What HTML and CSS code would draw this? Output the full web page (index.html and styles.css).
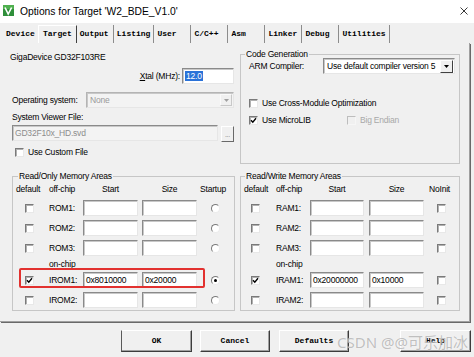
FILE: index.html
```html
<!DOCTYPE html>
<html>
<head>
<meta charset="utf-8">
<link rel="stylesheet" href="styles.css">
</head>
<body>
<header class="titlebar">
  <svg class="appicon" viewBox="0 0 11 11" width="11" height="11">
    <rect x="0" y="0" width="11" height="11" fill="#2f8f3a"/>
    <rect x="0" y="0" width="11" height="4" fill="#4fb04f"/>
    <path d="M2 2.5 L5.2 9 L8.6 2.5" fill="none" stroke="#fff" stroke-width="1.6"/>
  </svg>
  <span class="title">Options for Target 'W2_BDE_V1.0'</span>
  <svg class="close" viewBox="0 0 8 8" width="8" height="8">
    <path d="M0.5 0.5 L7.5 7.5 M7.5 0.5 L0.5 7.5" stroke="#222" stroke-width="0.9"/>
  </svg>
</header>

<nav class="tabs">
  <span class="tab first">Device</span>
  <span class="tab active">Target</span>
  <span class="tab">Output</span>
  <span class="tab">Listing</span>
  <span class="tab">User</span>
  <span class="tab">C/C++</span>
  <span class="tab">Asm</span>
  <span class="tab">Linker</span>
  <span class="tab">Debug</span>
  <span class="tab">Utilities</span>
</nav>

<main class="panel">
  <section class="top">
    <div class="lcol">
      <div class="device">GigaDevice GD32F103RE</div>
      <div class="xtal">
        <span class="lbl"><u>X</u>tal (MHz):</span>
        <span class="edit xtal-in"><span class="hl">12.0</span></span>
      </div>
      <div class="os">
        <span class="os-lbl">Operating system:</span>
        <span class="combo disabled">None<span class="arrow dis"><svg viewBox="0 0 5 3" width="5" height="3"><path d="M0 0 H5 L2.5 3 Z" fill="#a0a0a0"/></svg></span></span>
      </div>
      <div class="svf-label">System Viewer File:</div>
      <div class="svf">
        <span class="edit disabled svf-in">GD32F10x_HD.svd</span>
        <span class="browse">...</span>
      </div>
      <div class="check-row custom"><span class="cb"></span>Use Custom File</div>
    </div>

    <fieldset class="group codegen">
      <legend>Code Generation</legend>
      <div class="cg-body">
        <div class="arm">
          <span class="arm-lbl">ARM Compiler:</span>
          <span class="combo cg-combo">Use default compiler version 5<span class="arrow btnarrow"><svg viewBox="0 0 5 3" width="5" height="3"><path d="M0 0 H5 L2.5 3 Z" fill="#000"/></svg></span></span>
        </div>
        <div class="check-row cross"><span class="cb"></span>Use Cross-Module Optimization</div>
        <div class="check-row micro">
          <span class="micro-item"><span class="cb checked"><svg viewBox="0 0 7 7" width="7" height="7"><path d="M1 3.2 L2.8 5.2 L6 1.3" fill="none" stroke="#000" stroke-width="1.4"/></svg></span>Use MicroLIB</span>
          <span class="big"><span class="cb dis"></span><span class="grey">Big Endian</span></span>
        </div>
      </div>
    </fieldset>
  </section>

  <section class="mem">
    <fieldset class="group ro">
      <legend>Read/Only Memory Areas</legend>
      <div class="memgrid ro-grid">
        <span class="h c1">default</span><span class="h">off-chip</span><span class="h ctr s1">Start</span><span class="h ctr">Size</span><span class="h c5">Startup</span>

        <span class="cb c1b"></span><span>ROM1:</span><span class="edit s1"></span><span class="edit"></span><span class="rb"></span>
        <span class="cb c1b"></span><span>ROM2:</span><span class="edit s1"></span><span class="edit"></span><span class="rb"></span>
        <span class="cb c1b"></span><span>ROM3:</span><span class="edit s1"></span><span class="edit"></span><span class="rb"></span>

        <span></span><span class="onchip">on-chip</span><span></span><span></span><span></span>

        <span class="cb c1b checked"><svg viewBox="0 0 7 7" width="7" height="7"><path d="M1 3.2 L2.8 5.2 L6 1.3" fill="none" stroke="#000" stroke-width="1.4"/></svg></span><span>IROM1:</span><span class="edit s1">0x8010000</span><span class="edit">0x20000</span><span class="rb on"></span>
        <span class="cb c1b"></span><span>IROM2:</span><span class="edit s1"></span><span class="edit"></span><span class="rb"></span>

        <div class="mark"></div>
      </div>
    </fieldset>

    <fieldset class="group rw">
      <legend>Read/Write Memory Areas</legend>
      <div class="memgrid rw-grid">
        <span class="h c1">default</span><span class="h">off-chip</span><span class="h ctr s1">Start</span><span class="h ctr">Size</span><span class="h c5n">NoInit</span>

        <span class="cb c1r"></span><span>RAM1:</span><span class="edit s1"></span><span class="edit"></span><span class="cb ni"></span>
        <span class="cb c1r"></span><span>RAM2:</span><span class="edit s1"></span><span class="edit"></span><span class="cb ni"></span>
        <span class="cb c1r"></span><span>RAM3:</span><span class="edit s1"></span><span class="edit"></span><span class="cb ni"></span>

        <span></span><span class="onchip">on-chip</span><span></span><span></span><span></span>

        <span class="cb c1r checked"><svg viewBox="0 0 7 7" width="7" height="7"><path d="M1 3.2 L2.8 5.2 L6 1.3" fill="none" stroke="#000" stroke-width="1.4"/></svg></span><span>IRAM1:</span><span class="edit s1">0x20000000</span><span class="edit">0x10000</span><span class="cb ni"></span>
        <span class="cb c1r"></span><span>IRAM2:</span><span class="edit s1"></span><span class="edit"></span><span class="cb ni"></span>
      </div>
    </fieldset>
  </section>
</main>

<footer class="buttons">
  <span class="btn ok">OK</span>
  <span class="btn cancel">Cancel</span>
  <span class="btn defaults">Defaults</span>
  <span class="btn help">Help</span>
</footer>

<div class="watermark">CSDN @@可乐加冰</div>
</body>
</html>
```

FILE: styles.css
```css
* { box-sizing: border-box; }

body {
  margin: 0;
  width: 474px;
  height: 357px;
  overflow: hidden;
  position: relative;
  background: #f0f0f0;
  color: #000;
  font-family: "Liberation Sans", Arial, sans-serif;
  font-size: 8.5px;
  letter-spacing: -0.2px;
}

/* title bar */
.titlebar {
  height: 23px;
  background: #fff;
  display: flex;
  align-items: center;
  padding-left: 3px;
}
.appicon { margin-top: -2px; flex: none; }
.title {
  margin-left: 6px;
  font-size: 10.3px;
  letter-spacing: 0;
  margin-top: -1px;
}
.close { margin-left: auto; margin-right: 6px; margin-top: -2px; }

/* tabs */
.tabs {
  display: flex;
  height: 18px;
  margin-top: 2px;
  padding-left: 3px;
  font-family: "Liberation Mono", monospace;
  font-weight: bold;
  font-size: 8px;
  letter-spacing: 0;
}
.tab {
  min-width: 37px;
  padding: 3px 3px 0;
  line-height: 12px;
  border-right: 1px solid #8c8c8c;
  white-space: nowrap;
}
.tab.first { border-right: none; min-width: 35px; }
.tab.active {
  min-width: 0;
  padding: 2px 4px 0;
  border-top: 1px solid #fff;
  border-left: 1px solid #fff;
  border-right: 1px solid #404040;
}

/* panel */
.panel {
  width: 470px;
  height: 279px;
  border-right: 1px solid #a0a0a0;
  border-bottom: 1px solid #a0a0a0;
  box-shadow: 1px 1px 0 #696969;
}

.top { display: flex; height: 121px; }
.lcol { width: 240px; flex: none; padding: 0 6px 0 10px; }

.device { margin-top: 9px; line-height: 10px; }

.xtal {
  margin-top: 6px;
  height: 16px;
  display: flex;
  justify-content: flex-end;
  align-items: center;
  gap: 2px;
}
.xtal-in { width: 52px; }
.hl { background: #2a72d8; color: #fff; padding: 0 1px; }

.os {
  margin-top: 8px;
  height: 16px;
  display: flex;
  align-items: center;
  padding-left: 2px;
}
.os-lbl { width: 74px; flex: none; }
.os .combo { width: 148px; }

.svf-label { margin-top: 4px; line-height: 10px; padding-left: 2px; }
.svf {
  margin-top: 3px;
  height: 17px;
  display: flex;
  padding-left: 2px;
}
.svf-in { width: 206px; }
.browse {
  width: 13px;
  height: 16px;
  margin: 1px 0 0 3px;
  background: #f0f0f0;
  border: 1px solid;
  border-color: #fff #696969 #696969 #fff;
  color: #808080;
  font-size: 7px;
  line-height: 16px;
  text-align: center;
}

.check-row {
  display: flex;
  align-items: center;
  height: 10px;
  gap: 4px;
}
.custom { margin-top: 5px; padding-left: 5px; }

/* controls */
.edit {
  display: block;
  height: 16px;
  background: #fff;
  border: 1px solid;
  border-color: #8a8a8a #e6e6e6 #e6e6e6 #8a8a8a;
  box-shadow: inset 1px 1px 0 #c8c8c8;
  padding: 1px 0 0 2px;
  line-height: 12px;
  white-space: nowrap;
  overflow: hidden;
}
.edit.disabled { background: #f3f3f3; color: #8c8c8c; }

.combo {
  position: relative;
  display: flex;
  align-items: center;
  height: 16px;
  padding-left: 3px;
  background: #fff;
  border: 1px solid;
  border-color: #8a8a8a #e6e6e6 #e6e6e6 #8a8a8a;
  box-shadow: inset 1px 1px 0 #c8c8c8;
  white-space: nowrap;
}
.combo.disabled { background: #f3f3f3; color: #9a9a9a; border-color: #b4b4b4 #e6e6e6 #e6e6e6 #b4b4b4; }
.arrow {
  margin-left: auto;
  margin-right: 1px;
  width: 12px;
  height: 12px;
  display: flex;
  align-items: center;
  justify-content: center;
  border: 1px solid;
  border-color: #fff #808080 #808080 #fff;
  background: #f0f0f0;
}
.arrow.dis { border-color: #fafafa #c8c8c8 #c8c8c8 #fafafa; }

.cb {
  display: inline-flex;
  align-items: center;
  justify-content: center;
  width: 9px;
  height: 9px;
  flex: none;
  background: #fff;
  border: 1px solid;
  border-color: #7a7a7a #e8e8e8 #e8e8e8 #7a7a7a;
  box-shadow: inset 1px 1px 0 #b0b0b0;
}
.cb.dis { background: #f0f0f0; border-color: #bdbdbd #f6f6f6 #f6f6f6 #bdbdbd; box-shadow: none; }
.grey { color: #a8a8a8; }

.rb {
  display: block;
  width: 9px;
  height: 9px;
  border-radius: 50%;
  border: 1px solid;
  border-color: #7a7a7a #ececec #ececec #7a7a7a;
  background: #fff;
  position: relative;
}
.rb.on::after {
  content: "";
  position: absolute;
  left: 2px;
  top: 2px;
  width: 3px;
  height: 3px;
  border-radius: 50%;
  background: #000;
}

/* group boxes */
.group {
  margin: 0;
  padding: 0;
  border: 1px solid #c6c6c6;
  min-width: 0;
}
.group legend {
  padding: 0 1px;
  margin-left: 4px;
  line-height: 10px;
}

.codegen { width: 220px; margin-top: 6px; height: 115px; }
.cg-body { height: 103px; padding: 0 4px 0 8px; }
.arm { display: flex; align-items: center; height: 16px; margin-top: -1px; }
.arm-lbl { width: 74px; flex: none; }
.cg-combo { width: 132px; padding-left: 3px; }
.btnarrow { width: 13px; height: 13px; border-color: #fff #404040 #404040 #fff; }
.cross { margin-top: 24px; }
.micro { margin-top: 7px; gap: 0; }
.micro-item { display: flex; align-items: center; gap: 4px; width: 98px; flex: none; }
.big { display: flex; align-items: center; gap: 4px; }

/* memory areas */
.mem {
  display: flex;
  gap: 5px;
  margin-top: 7px;
  padding-left: 12px;
}
.ro { width: 223px; }
.ro legend { margin-left: 5px; }
.rw { width: 220px; }

.memgrid {
  position: relative;
  display: grid;
  grid-template-rows: 13px 16px 16px 16px 8px 16px 16px;
  row-gap: 4px;
  align-items: center;
  padding: 2px 0 2px;
  white-space: nowrap;
}
.ro-grid { grid-template-columns: 36px 34px 59px 55px 1fr; }
.rw-grid { grid-template-columns: 35px 34px 59px 55px 1fr; }
.ro-grid .s1 { width: 55px; }
.rw-grid .s1 { width: 54px; }
.ro-grid .edit:not(.s1) { width: 55px; }
.rw-grid .edit:not(.s1) { width: 55px; }

.h { line-height: 13px; }
.ctr { text-align: center; }
.c1 { margin-left: 3px; }
.c5 { margin-left: 3px; }
.c5n { margin-left: 5px; }
.c1b { margin-left: 12px; }
.c1r { margin-left: 10px; }
.ro-grid .rb { margin-left: 14px; }
.ni { margin-left: 13px; }
.onchip { line-height: 8px; }

.mark {
  position: absolute;
  left: 6px;
  top: 87px;
  width: 186px;
  height: 20px;
  border: 2px solid #e2312f;
  border-radius: 2px;
  pointer-events: none;
}

/* buttons */
.buttons {
  display: flex;
  margin-top: 8px;
  padding: 0 3px 0 121px;
}
.btn {
  height: 22px;
  width: 70px;
  background: #f0f0f0;
  border: 1px solid;
  border-color: #fff #3c3c3c #3c3c3c #fff;
  box-shadow: inset -1px -1px 0 #a0a0a0;
  font-family: "Liberation Mono", monospace;
  font-weight: bold;
  font-size: 8px;
  letter-spacing: 0;
  line-height: 20px;
  text-align: center;
}
.ok { width: 71px; border-color: #fff #3c3c3c #3c3c3c #5a5a5a; }
.cancel { margin-left: 8px; }
.defaults { margin-left: 9px; }
.help { margin-left: auto; width: 71px; }

.watermark {
  position: absolute;
  left: 337px;
  top: 333px;
  font-family: "Noto Sans", "Noto Sans CJK SC", sans-serif;
  font-size: 15px;
  line-height: 18px;
  letter-spacing: 0;
  color: rgba(150, 150, 150, 0.6);
  text-shadow: 0 0 1px rgba(255, 255, 255, 0.9);
  white-space: nowrap;
}
```
